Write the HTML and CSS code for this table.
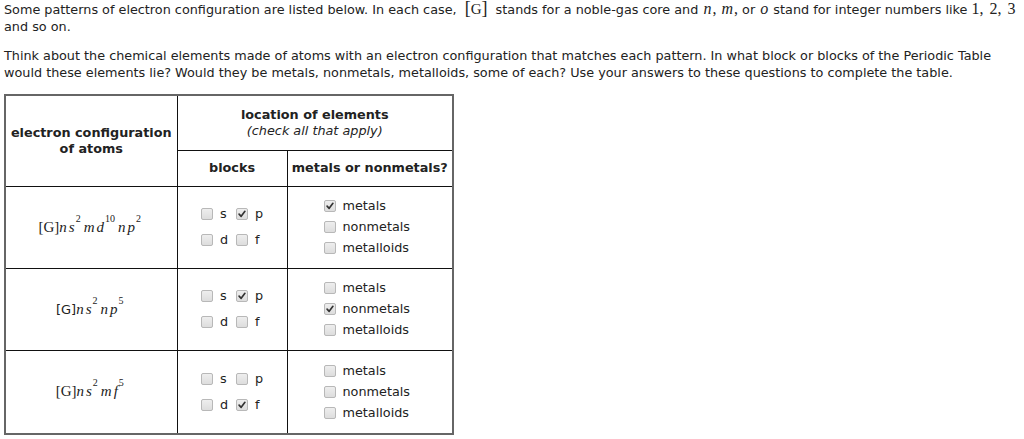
FILE: index.html
```html
<!DOCTYPE html>
<html>
<head>
<meta charset="utf-8">
<link rel="stylesheet" href="styles.css">
</head>
<body>
<p class="para">Some patterns of electron configuration are listed below. In each case, <span class="core"><span class="brk">[</span>G<span class="brk">]</span></span> stands for a noble-gas core and <i class="mv">n</i><span class="mc">,</span> <i class="mv">m</i><span class="mc">,</span> or <i class="mv">o</i> stand for integer numbers like <span class="num">1, 2, 3</span><br>and so on.</p>
<p class="para">Think about the chemical elements made of atoms with an electron configuration that matches each pattern. In what block or blocks of the Periodic Table<br>would these elements lie? Would they be metals, nonmetals, metalloids, some of each? Use your answers to these questions to complete the table.</p>

<table class="grid">
  <colgroup><col class="c1"><col class="c2"><col class="c3"></colgroup>
  <tr class="h1">
    <th rowspan="2">electron configuration<br>of atoms</th>
    <th colspan="2">location of elements<br><span class="sub">(check all that apply)</span></th>
  </tr>
  <tr class="h2">
    <th>blocks</th>
    <th>metals or nonmetals?</th>
  </tr>
  <tr class="row">
    <td><span class="f"><span class="g">[G]</span><i>n</i><i>s</i><sup>2</sup><i>m</i><i>d</i><sup>10</sup><i>n</i><i>p</i><sup>2</sup></span></td>
    <td>
      <div class="blocks">
        <label class="opt"><span class="cb"></span>s</label>
        <label class="opt"><span class="cb on"><svg viewBox="0 0 12 12"><path d="M2.5 6.2 L5 8.8 L9.5 2.8"/></svg></span>p</label>
        <label class="opt"><span class="cb"></span>d</label>
        <label class="opt"><span class="cb"></span>f</label>
      </div>
    </td>
    <td>
      <div class="opts">
        <label class="opt"><span class="cb on"><svg viewBox="0 0 12 12"><path d="M2.5 6.2 L5 8.8 L9.5 2.8"/></svg></span>metals</label>
        <label class="opt"><span class="cb"></span>nonmetals</label>
        <label class="opt"><span class="cb"></span>metalloids</label>
      </div>
    </td>
  </tr>
  <tr class="row">
    <td><span class="f"><span class="g sans">[G]</span><i>n</i><i>s</i><sup>2</sup><i>n</i><i>p</i><sup>5</sup></span></td>
    <td>
      <div class="blocks">
        <label class="opt"><span class="cb"></span>s</label>
        <label class="opt"><span class="cb on"><svg viewBox="0 0 12 12"><path d="M2.5 6.2 L5 8.8 L9.5 2.8"/></svg></span>p</label>
        <label class="opt"><span class="cb"></span>d</label>
        <label class="opt"><span class="cb"></span>f</label>
      </div>
    </td>
    <td>
      <div class="opts">
        <label class="opt"><span class="cb"></span>metals</label>
        <label class="opt"><span class="cb on"><svg viewBox="0 0 12 12"><path d="M2.5 6.2 L5 8.8 L9.5 2.8"/></svg></span>nonmetals</label>
        <label class="opt"><span class="cb"></span>metalloids</label>
      </div>
    </td>
  </tr>
  <tr class="row last">
    <td><span class="f"><span class="g">[G]</span><i>n</i><i>s</i><sup>2</sup><i>m</i><i>f</i><sup>5</sup></span></td>
    <td>
      <div class="blocks">
        <label class="opt"><span class="cb"></span>s</label>
        <label class="opt"><span class="cb"></span>p</label>
        <label class="opt"><span class="cb"></span>d</label>
        <label class="opt"><span class="cb on"><svg viewBox="0 0 12 12"><path d="M2.5 6.2 L5 8.8 L9.5 2.8"/></svg></span>f</label>
      </div>
    </td>
    <td>
      <div class="opts">
        <label class="opt"><span class="cb"></span>metals</label>
        <label class="opt"><span class="cb"></span>nonmetals</label>
        <label class="opt"><span class="cb"></span>metalloids</label>
      </div>
    </td>
  </tr>
</table>
</body>
</html>
```

FILE: styles.css
```css
html, body {
  background: #fff;
}
body {
  margin: 0;
  padding: 1px 2px 0 4px;
  font-family: "DejaVu Sans", Verdana, sans-serif;
  font-size: 12.8px;
  line-height: 17px;
  color: #222;
}
.para {
  margin: 0 0 12px 0;
}
.core {
  font-family: "Liberation Serif", "Times New Roman", serif;
  font-size: 15px;
  line-height: 12px;
  padding: 0 4px 0 4px;
}
.brk {
  font-size: 18px;
  line-height: 12px;
}
.mv {
  font-family: "Liberation Serif", "Times New Roman", serif;
  font-size: 16px;
  line-height: 12px;
  margin: 0 1px;
}
.mc {
  font-family: "Liberation Serif", "Times New Roman", serif;
  font-size: 16px;
  line-height: 12px;
}
.num {
  font-family: "Liberation Serif", "Times New Roman", serif;
  font-size: 16px;
  line-height: 12px;
  word-spacing: 2px;
  white-space: nowrap;
}

.grid {
  border-collapse: collapse;
  border: 2px solid #666;
  margin-top: 13px;
}
.c1 { width: 172px; }
.c2 { width: 110px; }
.c3 { width: 166px; }
.grid th, .grid td {
  border: 1px solid #111;
  text-align: center;
  vertical-align: middle;
  padding: 0;
}
.grid th {
  font-weight: bold;
  line-height: 16px;
}
.sub {
  font-weight: normal;
  font-style: italic;
}
.h1 { height: 55px; }
.h2 { height: 36px; }
.row { height: 82px; }
.row.last { height: 84px; }

.f {
  font-family: "Liberation Serif", "Times New Roman", serif;
  font-size: 15px;
  color: #222;
}
.f i {
  margin-right: 2px;
}
.g.sans {
  font-family: "DejaVu Sans", Verdana, sans-serif;
  font-size: 13px;
}
.f sup {
  font-size: 10px;
  line-height: 0;
  vertical-align: 10px;
  margin-right: 3px;
  margin-left: -1px;
}

.blocks {
  display: inline-grid;
  grid-template-columns: auto auto;
  column-gap: 8px;
  row-gap: 10px;
  text-align: left;
}
.opts {
  display: flex;
  flex-direction: column;
  gap: 5px;
  padding-left: 36px;
  text-align: left;
}
.opt {
  display: flex;
  align-items: center;
  gap: 7px;
  line-height: 16px;
  color: #222;
}
.cb {
  width: 12px;
  height: 12px;
  box-sizing: border-box;
  border: 1px solid #b8b8b8;
  border-radius: 2px;
  background: linear-gradient(#eeeeee, #dddddd);
  display: inline-flex;
  align-items: center;
  justify-content: center;
}
.cb svg {
  width: 10px;
  height: 10px;
}
.cb svg path {
  fill: none;
  stroke: #333;
  stroke-width: 2;
  stroke-linecap: round;
  stroke-linejoin: round;
}
```
